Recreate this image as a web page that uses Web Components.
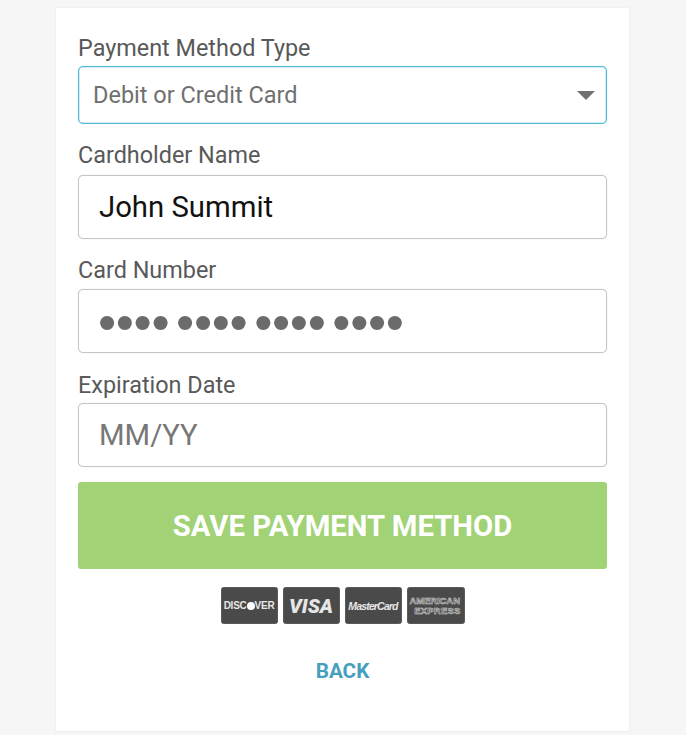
<!DOCTYPE html>
<html><head><meta charset="utf-8"><style>
html,body{margin:0;padding:0;background:#f6f6f6;font-family:Roboto,sans-serif}
body{padding:8px 57px 4px 56px;width:573px;height:723px}
</style></head><body>
<pay-card>
<form-field label="Payment Method Type"><select-box>Debit or Credit Card</select-box></form-field>
<form-field label="Cardholder Name" style="--top:18.5px;--h:32.5px"><text-box>John Summit</text-box></form-field>
<form-field label="Card Number" style="--top:18.5px;--h:31.5px"><text-box kind="dots">•••• •••• •••• ••••</text-box></form-field>
<form-field label="Expiration Date" style="--top:19.5px;--h:30.5px"><text-box kind="ph">MM/YY</text-box></form-field>
<save-button>SAVE PAYMENT METHOD</save-button>
<card-logos></card-logos>
<back-link>BACK</back-link>
</pay-card>
<script>
function def(name,html){customElements.define(name,class extends HTMLElement{connectedCallback(){if(this.shadowRoot)return;const r=this.attachShadow({mode:'open'});r.innerHTML=typeof html==='function'?html(this):html;}});}
def('pay-card',`<style>:host{display:block;box-sizing:border-box;height:723px;background:#fff;box-shadow:0 0 2px rgba(0,0,0,.08);padding:28px 22px 0}</style><slot></slot>`);
def('form-field',el=>`<style>:host{display:block;padding-top:var(--top,0)}
.l{display:block;font-size:23.4px;line-height:25px;color:#595959;height:var(--h,30px)}</style><span class="l">${el.getAttribute('label')}</span><slot></slot>`);
def('select-box',`<style>:host{display:flex;align-items:center;justify-content:space-between;box-sizing:border-box;height:58px;border:1px solid #5ab9d2;box-shadow:inset 0 0 0 .5px #a5dbe8,0 0 1px #8fd0e2;border-radius:5px;padding:0 11px 0 14px;font-size:23.5px;color:#6f6f6f;background:#fff}
.a{width:0;height:0;border-left:9px solid transparent;border-right:9px solid transparent;border-top:9px solid #707070}</style><span><slot></slot></span><span class="a"></span>`);
def('text-box',el=>{const k=el.getAttribute('kind');const c=k==='dots'?'#6b6b6b':k==='ph'?'#777':'#111';return `<style>:host{display:flex;align-items:center;box-sizing:border-box;height:64px;border:1px solid #c6c6c6;box-shadow:0 0 1px #ccc;border-radius:5px;padding:0 20px 1px 20px;font-size:29.3px;color:${c};background:#fff;white-space:pre}
${k==='dots'?'span{font-family:"Liberation Sans",sans-serif;font-size:52px;line-height:40px;letter-spacing:-.4px;word-spacing:-7.15px;margin:2px 0 0 -1px}':''}</style><span><slot></slot></span>`});
def('save-button',`<style>:host{display:flex;align-items:center;justify-content:center;box-sizing:border-box;height:87px;margin-top:15px;background:#a1d276;border-radius:3px;color:#fff;font-weight:700;font-size:29.3px}</style><slot></slot>`);
const logo=(w,inner)=>`<svg width="${w}" height="37" viewBox="0 0 ${w} 37" aria-hidden="true"><rect x=".5" y=".5" width="${w-1}" height="36" rx="2" fill="#4a4a4a" stroke="#5a5a5a"/>${inner}</svg>`;
def('card-logos',`<style>:host{display:flex;justify-content:center;gap:5px;margin-top:18px;height:37px}
.w{position:relative;display:block;height:37px}svg{display:block}
t{position:absolute;left:0;right:0;top:0;bottom:0;display:flex;align-items:center;justify-content:center;color:#e6e6e6;font-family:"Liberation Sans",sans-serif;white-space:nowrap}
.am{flex-direction:column;font-size:9.5px;line-height:9px;font-weight:700;color:transparent;-webkit-text-stroke:.5px #ddd;letter-spacing:-.1px}
.am b{align-self:flex-start;margin-left:3px;font-weight:700;line-height:9px}
.am b+b{align-self:flex-end;margin:1px 4px 0 0;letter-spacing:.2px}
</style>
<span class="w" style="width:57px">${logo(57,'')}<t style="font-size:10px;font-weight:700;letter-spacing:-.25px">DISC<span style="display:inline-block;width:8px;height:8px;background:#fff;border-radius:50%"></span>VER</t></span>
<span class="w" style="width:57px">${logo(57,'')}<t style="font-family:Roboto,sans-serif;font-size:20px;font-weight:900;font-style:italic">VISA</t></span>
<span class="w" style="width:57px">${logo(57,'')}<t style="font-size:10.5px;font-weight:700;font-style:italic;letter-spacing:-.85px">MasterCard</t></span>
<span class="w" style="width:58px">${logo(58,'')}<t class="am"><b>AMERICAN</b><b>EXPRESS</b></t></span>`);
def('back-link',`<style>:host{display:block;text-align:center;margin-top:35px;font-size:20.7px;line-height:24px;font-weight:700;color:#46a0bd}</style><slot></slot>`);
</script>
</body></html>
